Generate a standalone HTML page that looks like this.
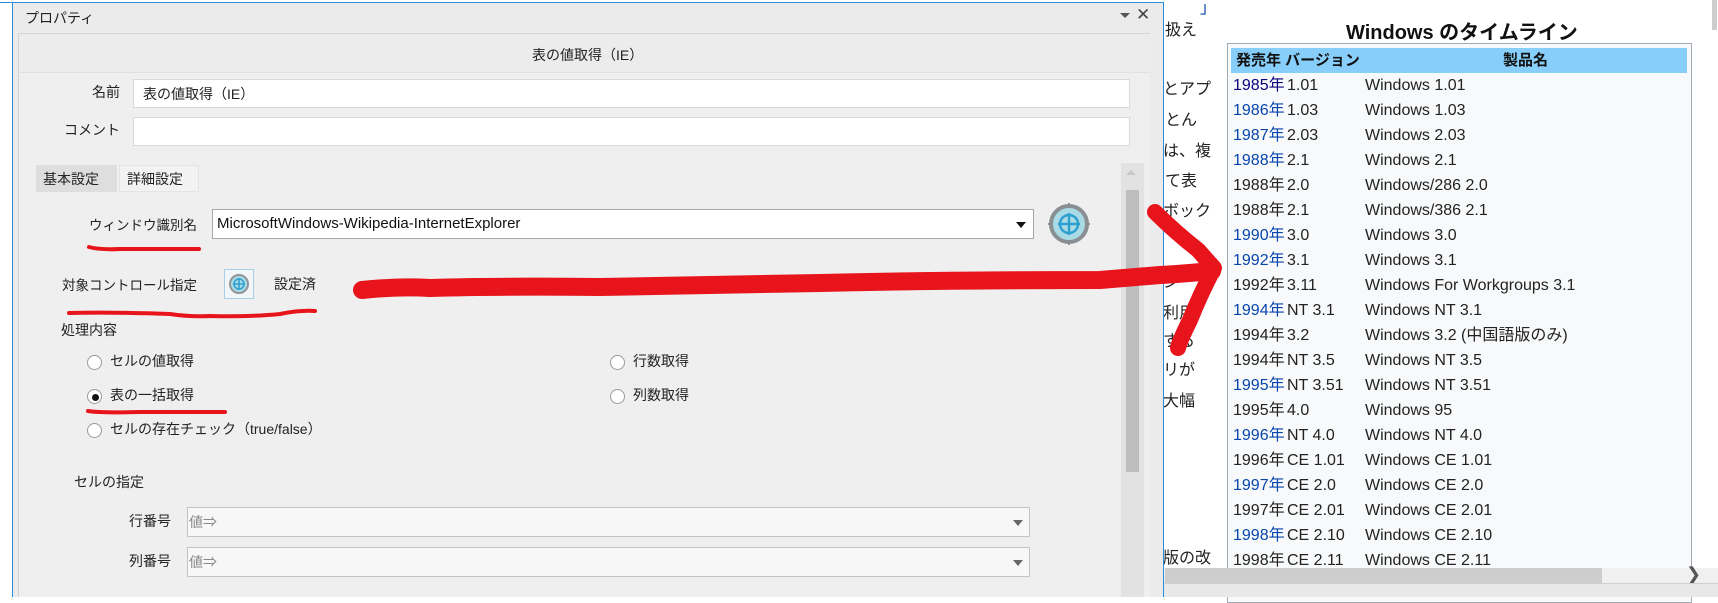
<!DOCTYPE html>
<html><head><meta charset="utf-8"><style>
*{margin:0;padding:0;box-sizing:border-box}
body{width:1718px;height:597px;overflow:hidden;background:#fff;position:relative;font-family:"Liberation Sans","Noto Sans CJK JP",sans-serif;color:#222}
.a{position:absolute;white-space:nowrap}
.jp{font-size:14px;color:#222}
.inp{position:absolute;background:#fff;border:1px solid #d9d9d9}
.radio{position:absolute;width:15px;height:15px;border:1px solid #9a9a9a;border-radius:50%;background:#fff}
.wt{font-size:16px;color:#222}
.row{position:absolute;left:1233px;font-size:16px;height:25px;line-height:25px;white-space:nowrap}
.row .y{display:inline-block;width:54px}
.row .v{position:absolute;left:132px}
.b{color:#0645ad}
</style></head><body>

<!-- right page text -->
<div class="a" style="left:1200px;top:-6px;font-size:16px;color:#0645ad;">」</div>
<div class="a wt" style="left:1165px;top:16px;">扱え</div>
<div class="a wt" style="left:1163px;top:75px;">とアプ</div>
<div class="a wt" style="left:1165px;top:106px;">とん</div>
<div class="a wt" style="left:1163px;top:137px;">は、複</div>
<div class="a wt" style="left:1165px;top:167px;">て表</div>
<div class="a wt" style="left:1163px;top:197px;">ボック</div>
<div class="a wt" style="left:1163px;top:268px;">ジ</div>
<div class="a wt" style="left:1163px;top:299px;">利用</div>
<div class="a wt" style="left:1163px;top:327px;">する</div>
<div class="a wt" style="left:1163px;top:356px;">リが</div>
<div class="a wt" style="left:1163px;top:387px;">大幅</div>
<div class="a wt" style="left:1163px;top:544px;">版の改</div>

<div class="a" style="left:1346px;top:16px;font-size:20px;font-weight:bold;color:#111;">Windows のタイムライン</div>
<div class="a" style="left:1227px;top:43px;width:465px;height:560px;background:#f8f9fa;border:1px solid #a2a9b1;"></div>
<div class="a" style="left:1231px;top:48px;width:456px;height:25px;background:#87cefa;"></div>
<div class="a" style="left:1236px;top:49px;font-size:15px;font-weight:bold;line-height:23px;color:#111">発売年 バージョン</div>
<div class="a" style="left:1503px;top:49px;font-size:15px;font-weight:bold;line-height:23px;color:#111">製品名</div>

<div class="row" style="top:73px"><span class="y" style="color:#0b0080">1985年</span>1.01<span class="v">Windows 1.01</span></div>
<div class="row" style="top:98px"><span class="y b">1986年</span>1.03<span class="v">Windows 1.03</span></div>
<div class="row" style="top:123px"><span class="y b">1987年</span>2.03<span class="v">Windows 2.03</span></div>
<div class="row" style="top:148px"><span class="y b">1988年</span>2.1<span class="v">Windows 2.1</span></div>
<div class="row" style="top:173px"><span class="y">1988年</span>2.0<span class="v">Windows/286 2.0</span></div>
<div class="row" style="top:198px"><span class="y">1988年</span>2.1<span class="v">Windows/386 2.1</span></div>
<div class="row" style="top:223px"><span class="y b">1990年</span>3.0<span class="v">Windows 3.0</span></div>
<div class="row" style="top:248px"><span class="y b">1992年</span>3.1<span class="v">Windows 3.1</span></div>
<div class="row" style="top:273px"><span class="y">1992年</span>3.11<span class="v">Windows For Workgroups 3.1</span></div>
<div class="row" style="top:298px"><span class="y b">1994年</span>NT 3.1<span class="v">Windows NT 3.1</span></div>
<div class="row" style="top:323px"><span class="y">1994年</span>3.2<span class="v">Windows 3.2 (中国語版のみ)</span></div>
<div class="row" style="top:348px"><span class="y">1994年</span>NT 3.5<span class="v">Windows NT 3.5</span></div>
<div class="row" style="top:373px"><span class="y b">1995年</span>NT 3.51<span class="v">Windows NT 3.51</span></div>
<div class="row" style="top:398px"><span class="y">1995年</span>4.0<span class="v">Windows 95</span></div>
<div class="row" style="top:423px"><span class="y b">1996年</span>NT 4.0<span class="v">Windows NT 4.0</span></div>
<div class="row" style="top:448px"><span class="y">1996年</span>CE 1.01<span class="v">Windows CE 1.01</span></div>
<div class="row" style="top:473px"><span class="y b">1997年</span>CE 2.0<span class="v">Windows CE 2.0</span></div>
<div class="row" style="top:498px"><span class="y">1997年</span>CE 2.01<span class="v">Windows CE 2.01</span></div>
<div class="row" style="top:523px"><span class="y b">1998年</span>CE 2.10<span class="v">Windows CE 2.10</span></div>
<div class="row" style="top:548px"><span class="y">1998年</span>CE 2.11<span class="v">Windows CE 2.11</span></div>

<!-- vertical page scrollbar -->
<div class="a" style="left:1700px;top:0;width:18px;height:568px;background:#fff"></div>
<div class="a" style="left:1712px;top:0;width:5px;height:30px;background:#cdcdcd"></div>
<!-- bottom scrollbar -->
<div class="a" style="left:1164px;top:568px;width:554px;height:15px;background:#f0f0f0"></div>
<div class="a" style="left:1165px;top:568px;width:437px;height:15px;background:#cdcdcd"></div>
<div class="a" style="left:1686px;top:564px;font-size:18px;color:#555">&#x276F;</div>
<div class="a" style="left:1164px;top:583px;width:554px;height:14px;background:#e8e8e8;border-top:1px solid #d0d0d0"></div>

<!-- top blue line -->
<div class="a" style="left:0;top:0;width:1164px;height:3px;background:#fff;border-bottom:1px solid #2b8de0"></div>

<!-- properties panel -->
<div class="a" style="left:12px;top:3px;width:1152px;height:594px;background:#ebebeb;border-left:1px solid #2b8de0;border-right:1px solid #2b8de0"></div>
<div class="a jp" style="left:25px;top:8px;font-size:14px;">プロパティ</div>
<div class="a" style="left:1120px;top:13px;width:0;height:0;border-left:5px solid transparent;border-right:5px solid transparent;border-top:5px solid #555"></div>
<div class="a" style="left:1136px;top:5px;font-size:17px;color:#444">✕</div>
<div class="a" style="left:18px;top:33px;width:1132px;height:564px;background:#efefef;border-left:1px solid #d4d4d4;border-top:1px solid #d4d4d4"></div>
<div class="a" style="left:19px;top:34px;width:1131px;height:39px;border-bottom:1px solid #e0e0e0;background:#ececec"></div>
<div class="a jp" style="left:532px;top:45px;">表の値取得（IE）</div>

<div class="a jp" style="left:60px;top:82px;width:60px;text-align:right">名前</div>
<div class="inp" style="left:133px;top:79px;width:997px;height:29px"></div>
<div class="a jp" style="left:143px;top:84px;">表の値取得（IE）</div>
<div class="a jp" style="left:60px;top:120px;width:60px;text-align:right">コメント</div>
<div class="inp" style="left:133px;top:117px;width:997px;height:29px"></div>

<div class="a" style="left:36px;top:165px;width:81px;height:27px;background:#dedede"></div>
<div class="a jp" style="left:43px;top:169px;">基本設定</div>
<div class="a" style="left:119px;top:165px;width:80px;height:27px;background:#f2f2f2;border:1px solid #e4e4e4"></div>
<div class="a jp" style="left:127px;top:169px;">詳細設定</div>

<!-- scrollbar -->
<div class="a" style="left:1121px;top:163px;width:23px;height:434px;background:#e2e2e2"></div>
<div class="a" style="left:1126px;top:170px;width:0;height:0;border-left:5px solid transparent;border-right:5px solid transparent;border-bottom:5px solid #c8c8c8"></div>
<div class="a" style="left:1126px;top:190px;width:13px;height:282px;background:#bdbdbd"></div>

<div class="a jp" style="left:60px;top:214px;width:137px;text-align:right;font-size:13.5px">ウィンドウ識別名</div>
<div class="inp" style="left:212px;top:209px;width:822px;height:30px;border:1px solid #a8a8a8"></div>
<div class="a" style="left:217px;top:215px;font-size:15px;color:#111">MicrosoftWindows-Wikipedia-InternetExplorer</div>
<div class="a" style="left:1016px;top:222px;width:0;height:0;border-left:5px solid transparent;border-right:5px solid transparent;border-top:6px solid #111"></div>

<svg class="a" style="left:1047px;top:202px" width="44" height="44" viewBox="0 0 44 44">
<circle cx="22" cy="22" r="18" fill="#a9dbe6" stroke="#8a8f94" stroke-width="4"/>
<circle cx="22" cy="22" r="9" fill="none" stroke="#2f9fd0" stroke-width="2.5"/>
<path d="M22 11V33M11 22H33" stroke="#2f9fd0" stroke-width="2.5"/>
<path d="M22 1V5M22 39V43M1 22H5M39 22H43" stroke="#8a8f94" stroke-width="2"/>
</svg>

<div class="a jp" style="left:40px;top:274px;width:157px;text-align:right;font-size:13.5px">対象コントロール指定</div>
<div class="a" style="left:224px;top:269px;width:30px;height:30px;background:#f2f6f8;border:1px solid #a9cfe6"></div>
<svg class="a" style="left:227px;top:272px" width="24" height="24" viewBox="0 0 24 24">
<circle cx="12" cy="12" r="9" fill="#a9dbe6" stroke="#8f959a" stroke-width="2"/>
<circle cx="12" cy="12" r="5" fill="none" stroke="#2f9fd0" stroke-width="1.5"/>
<path d="M12 6V18M6 12H18" stroke="#2f9fd0" stroke-width="1.5"/>
</svg>
<div class="a jp" style="left:274px;top:274px;">設定済</div>

<div class="a jp" style="left:61px;top:320px;">処理内容</div>
<div class="radio" style="left:87px;top:355px"></div>
<div class="a jp" style="left:110px;top:351px;">セルの値取得</div>
<div class="radio" style="left:87px;top:389px"></div>
<div class="a" style="left:92px;top:394px;width:7px;height:7px;border-radius:50%;background:#111"></div>
<div class="a jp" style="left:110px;top:385px;">表の一括取得</div>
<div class="radio" style="left:87px;top:423px"></div>
<div class="a jp" style="left:110px;top:419px;">セルの存在チェック（true/false）</div>
<div class="radio" style="left:610px;top:355px"></div>
<div class="a jp" style="left:633px;top:351px;">行数取得</div>
<div class="radio" style="left:610px;top:389px"></div>
<div class="a jp" style="left:633px;top:385px;">列数取得</div>

<div class="a jp" style="left:74px;top:472px;">セルの指定</div>
<div class="a jp" style="left:129px;top:511px;">行番号</div>
<div class="inp" style="left:187px;top:507px;width:843px;height:30px;background:#f7f7f7;border-color:#c4c4c4"></div>
<div class="a jp" style="left:189px;top:512px;color:#888">値⇒</div>
<div class="a" style="left:1013px;top:520px;width:0;height:0;border-left:5px solid transparent;border-right:5px solid transparent;border-top:6px solid #666"></div>
<div class="a jp" style="left:129px;top:551px;">列番号</div>
<div class="inp" style="left:187px;top:547px;width:843px;height:30px;background:#f7f7f7;border-color:#c4c4c4"></div>
<div class="a jp" style="left:189px;top:552px;color:#888">値⇒</div>
<div class="a" style="left:1013px;top:560px;width:0;height:0;border-left:5px solid transparent;border-right:5px solid transparent;border-top:6px solid #666"></div>

<!-- red annotations -->
<svg class="a" style="left:0;top:0" width="1718" height="597">
<g fill="none" stroke="#e8141c" stroke-linecap="round" stroke-linejoin="round">
<path d="M89 247 Q100 250 120 249 L199 249" stroke-width="4"/>
<path d="M69 313 Q110 312 170 314 Q190 317 210 316 Q250 317 280 314 Q300 310 315 311" stroke-width="4"/>
<path d="M88 411 Q100 413 140 412 L225 412" stroke-width="4"/>
<path d="M362 290 Q400 286 430 288 Q500 286 600 287 Q700 285 820 283 Q950 280 1100 280 L1160 275 Q1180 274 1212 271" stroke-width="18"/>
<path d="M1155 212 Q1175 232 1198 250 L1214 268 Q1200 295 1190 320 Q1180 340 1178 348" stroke-width="16"/>
</g>
</svg>
</body></html>
